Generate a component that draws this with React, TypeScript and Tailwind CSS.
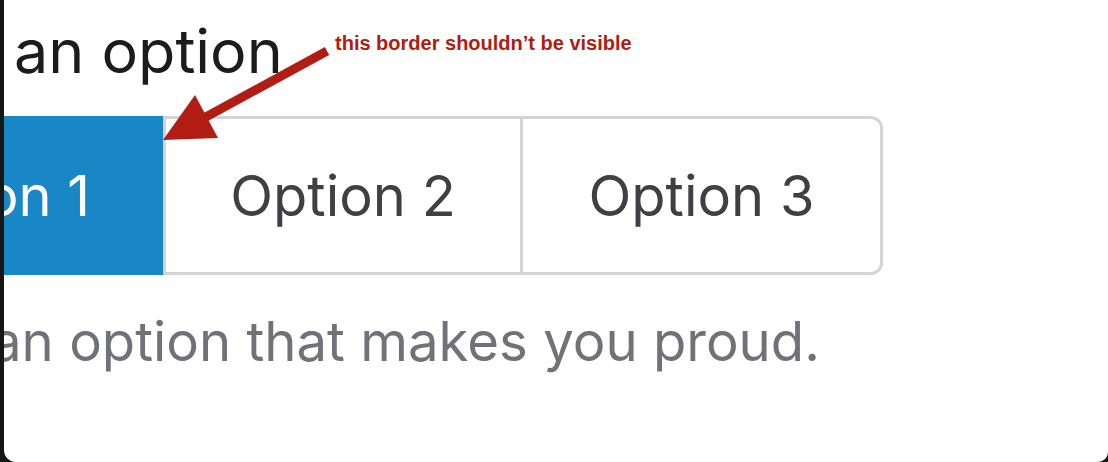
export default function App() {
  const options = [
    { label: "Option 1", cls: "w-[360px] bg-[#1987c6] text-white border-y-[3px] border-[#1987c6] rounded-l-[12px]" },
    { label: "Option 2", cls: "w-[357px] bg-white text-[#3f3f46] border-y-[3px] border-l-[3px] border-[#d4d4d8]" },
    { label: "Option 3", cls: "w-[363px] bg-white text-[#3f3f46] border-[3px] border-[#d4d4d8] rounded-r-[12px]" },
  ];

  return (
    <div className="w-[1108px] h-[462px] bg-[#161616] flex overflow-hidden">
      <div
        className="relative ml-[4px] flex-1 h-full bg-white rounded-bl-[12px] rounded-br-[10px] overflow-hidden"
        style={{ fontFamily: "Inter, 'Noto Sans', sans-serif" }}
      >
        <div className="flex flex-col pt-[15px]">
          <h1 className="ml-[10px] text-[61px] leading-[72px] text-[#1c1c1f] font-normal whitespace-nowrap">
            an option
          </h1>

          <div className="flex ml-[-201px] mt-[29px] h-[159px]">
            {options.map((o) => (
              <button
                key={o.label}
                className={"shrink-0 flex items-center justify-center text-[56px] " + o.cls}
              >
                {o.label}
              </button>
            ))}
          </div>

          <p className="ml-[-13px] mt-[30px] text-[54.5px] leading-[72px] text-[#71717a] whitespace-nowrap">
            an option that makes you proud.
          </p>
        </div>

        {/* annotation */}
        <svg className="absolute left-[-4px] top-0" width="1108" height="462" viewBox="0 0 1108 462">
          <line x1="327" y1="51" x2="204" y2="118" stroke="#b11d12" strokeWidth="9" />
          <polygon points="163,140 195,95 218,138" fill="#b11d12" />
        </svg>
        <span
          className="absolute left-[331px] top-[28px] text-[20px] font-bold text-[#b31b10] whitespace-nowrap"
          style={{ fontFamily: "'Liberation Sans', Arial, sans-serif" }}
        >
          this border shouldn’t be visible
        </span>
      </div>
    </div>
  );
}
